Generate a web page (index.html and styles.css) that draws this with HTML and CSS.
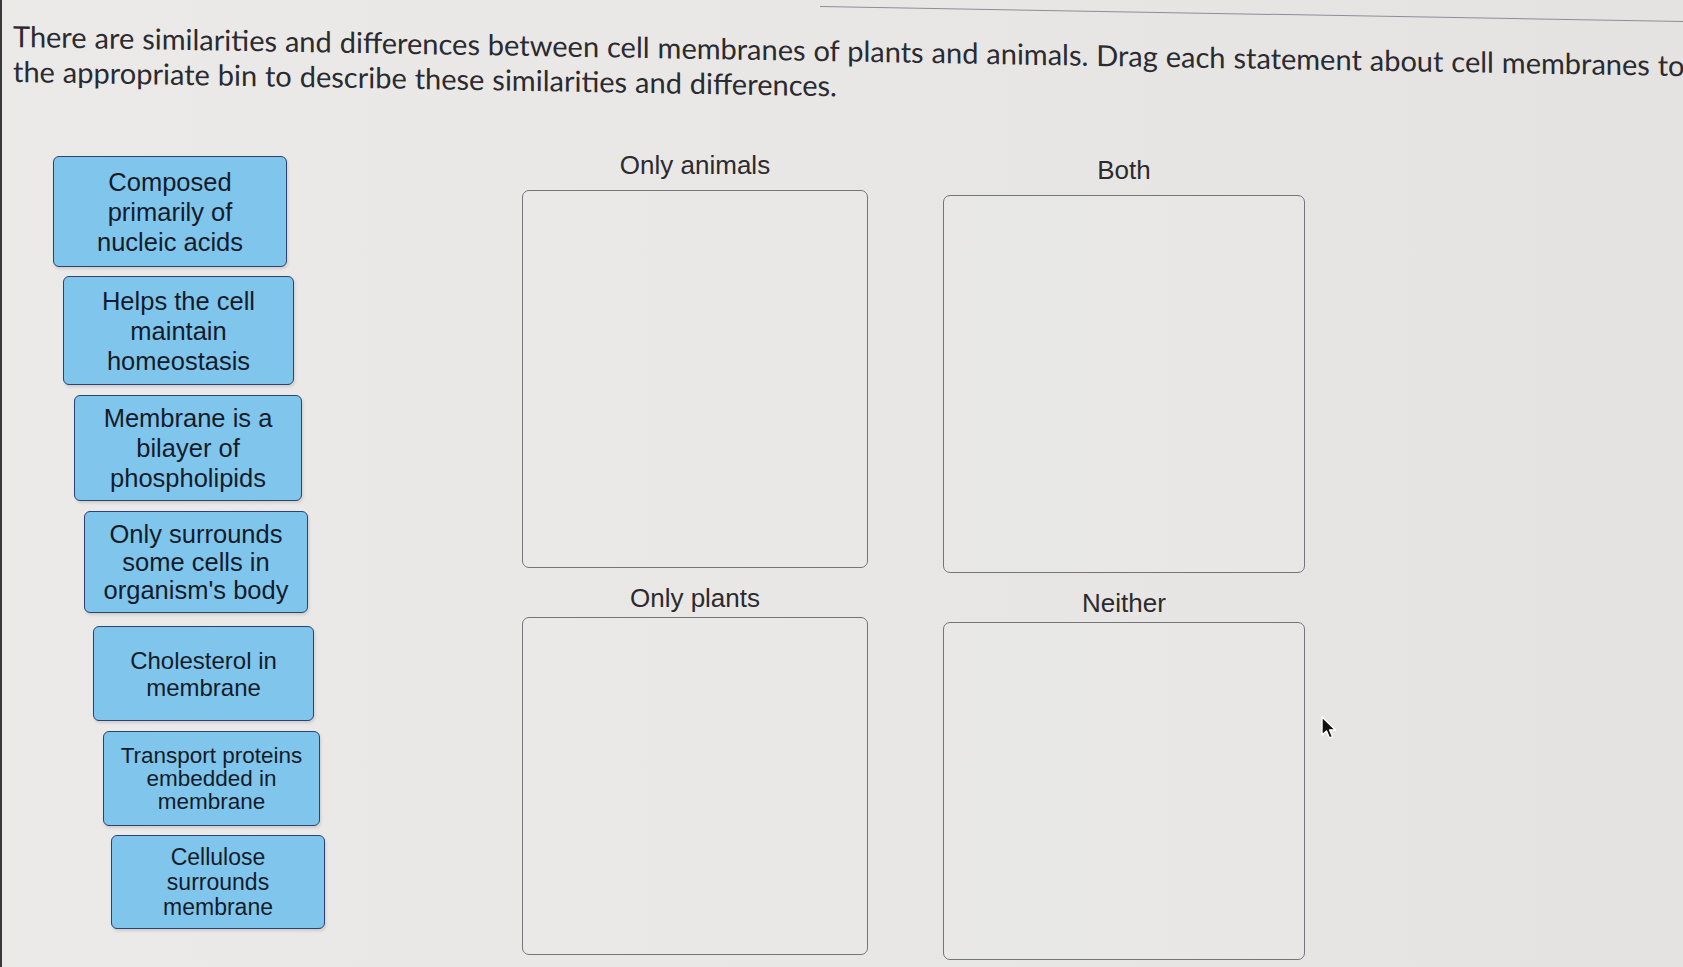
FILE: index.html
```html
<!DOCTYPE html>
<html lang="en">
<head>
<meta charset="utf-8">
<title>Cell membranes</title>
<link rel="stylesheet" href="styles.css">
</head>
<body>
<div class="page">
  <div class="rule"></div>
  <p class="prompt">There are similarities and differences between cell membranes of plants and animals. Drag each statement about cell membranes to<br>the appropriate bin to describe these similarities and differences.</p>
  <div class="workspace">
    <div class="tiles">
      <div class="tile t1">Composed<br>primarily of<br>nucleic acids</div>
      <div class="tile t2">Helps the cell<br>maintain<br>homeostasis</div>
      <div class="tile t3">Membrane is a<br>bilayer of<br>phospholipids</div>
      <div class="tile t4">Only surrounds<br>some cells in<br>organism's body</div>
      <div class="tile t5">Cholesterol in<br>membrane</div>
      <div class="tile t6">Transport proteins<br>embedded in<br>membrane</div>
      <div class="tile t7">Cellulose<br>surrounds<br>membrane</div>
    </div>
    <div class="bins">
      <div class="bin-col left">
        <div class="bin-label">Only animals</div>
        <div class="bin top"></div>
        <div class="bin-label lower">Only plants</div>
        <div class="bin bottom"></div>
      </div>
      <div class="bin-col right">
        <div class="bin-label">Both</div>
        <div class="bin top"></div>
        <div class="bin-label lower">Neither</div>
        <div class="bin bottom"></div>
      </div>
    </div>
  </div>
  <svg class="cursor" width="16" height="24" viewBox="0 0 16 24" aria-hidden="true">
    <path d="M1 1 L1 19 L5.5 15 L8.5 22 L11.5 20.7 L8.6 14 L14.5 14 Z" fill="#111" stroke="#fff" stroke-width="1.4" stroke-linejoin="round"/>
  </svg>
</div>
</body>
</html>
```

FILE: styles.css
```css
html, body {
  margin: 0;
  padding: 0;
}

body {
  background: #e7e6e4;
  width: 1683px;
  height: 967px;
  overflow: hidden;
}

.page {
  position: relative;
  box-sizing: border-box;
  width: 1683px;
  height: 967px;
  overflow: hidden;
  border-left: 2px solid #3a3a3c;
  background: linear-gradient(90deg, #ebeae8 0%, #e8e7e5 50%, #e4e3e1 100%);
}

.rule {
  height: 0;
  margin-left: 818px;
  border-top: 1px solid #8e8c98;
  position: relative;
  top: 6px;
  transform: skewY(1deg);
  transform-origin: 0 0;
}

.prompt {
  margin: 17px 0 0 11px;
  width: 1780px;
  font-family: Lato, "Open Sans", sans-serif;
  font-size: 29px;
  line-height: 35px;
  word-spacing: 0.5px;
  color: #2a2a30;
  white-space: nowrap;
  transform: skewY(1deg);
  transform-origin: 0 0;
}

.workspace {
  display: grid;
  grid-template-columns: 520px auto;
  margin-top: 62px;
}

.tiles {
  display: flex;
  flex-direction: column;
  padding: 6px 0 0 51px;
}

.tile {
  box-sizing: border-box;
  display: flex;
  align-items: center;
  justify-content: center;
  text-align: center;
  background: #80c5ec;
  border: 1.5px solid #2e4270;
  border-radius: 6px;
  box-shadow: 1px 2px 3px rgba(0, 0, 0, 0.12);
  font-family: "Liberation Sans", Arial, sans-serif;
  color: #141c2a;
  font-size: 25.5px;
  line-height: 30px;
}

.t1 { width: 234px; height: 111px; margin-left: 0; }
.t2 { width: 231px; height: 109px; margin-left: 10px; margin-top: 9px; }
.t3 { width: 228px; height: 106px; margin-left: 21px; margin-top: 10px; }
.t4 { width: 224px; height: 102px; margin-left: 31px; margin-top: 10px; line-height: 28px; }
.t5 { width: 221px; height: 95px; margin-left: 40px; margin-top: 13px; font-size: 24px; line-height: 27px; }
.t6 { width: 217px; height: 95px; margin-left: 50px; margin-top: 10px; font-size: 22.5px; line-height: 23px; }
.t7 { width: 214px; height: 94px; margin-left: 58px; margin-top: 9px; font-size: 23px; line-height: 25px; }

.bins {
  display: flex;
  gap: 80px;
}

.bin-col {
  display: flex;
  flex-direction: column;
}

.bin-col.left {
  width: 346px;
}

.bin-col.right {
  width: 362px;
  padding-top: 5px;
  margin-left: -5px;
}

.bin-label {
  height: 30px;
  line-height: 30px;
  text-align: center;
  font-family: "Liberation Sans", Arial, sans-serif;
  font-size: 26px;
  color: #2b2a2e;
}

.bin-label.lower {
  margin-top: 15px;
}

.bin {
  box-sizing: border-box;
  border: 1.5px solid #74747a;
  border-radius: 7px;
  background: rgba(255, 255, 255, 0.08);
}

.bin.top {
  margin-top: 10px;
  height: 378px;
}

.bin.bottom {
  margin-top: 4px;
  height: 338px;
}

.cursor {
  position: absolute;
  left: 1319px;
  top: 716px;
}
```
